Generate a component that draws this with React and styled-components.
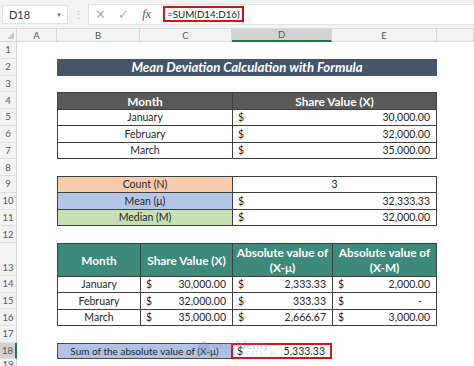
import React from 'react';
import styled, { createGlobalStyle } from 'styled-components';

const Global = createGlobalStyle`
  html, body { margin: 0; padding: 0; background: #fff; }
  body { font-family: Lato, "Noto Sans", sans-serif; }
`;

const Window = styled.div`
  width: 474px;
  height: 366px;
  overflow: hidden;
  display: flex;
  flex-direction: column;
  background: #fff;
  position: relative;
`;

const FormulaBar = styled.div`
  height: 29px;
  flex: none;
  display: flex;
  align-items: center;
  background: #f3f3f3;
  border-bottom: 1px solid #dadada;
  box-sizing: border-box;
  padding: 0 0 0 2px;
`;

const NameBox = styled.div`
  width: 66px;
  height: 19px;
  box-sizing: border-box;
  background: #fff;
  border: 1px solid #e2e2e2;
  display: flex;
  align-items: center;
  justify-content: space-between;
  padding: 0 5px 0 6px;
  font-size: 11px;
  color: #333;
`;

const Caret = styled.span`
  font-size: 6px;
  color: #777;
`;

const Dots = styled.div`
  width: 20px;
  text-align: center;
  color: #b5b5b5;
  font-size: 11px;
  line-height: 1;
`;

const InputArea = styled.div`
  flex: 1;
  height: 19px;
  background: #fff;
  border: 1px solid #e2e2e2;
  border-right: none;
  display: flex;
  align-items: center;
  padding-left: 0;
`;

const ToolIcon = styled.span`
  width: 23px;
  text-align: center;
  color: ${p => p.$c || '#b0b0b0'};
  font-size: ${p => p.$s || 12}px;
  font-family: ${p => p.$serif ? '"Liberation Serif", serif' : 'inherit'};
  font-style: ${p => p.$serif ? 'italic' : 'normal'};
`;

const FormulaText = styled.div`
  margin-left: 5px;
  height: 16px;
  box-sizing: border-box;
  border: 2px solid #e01010;
  display: flex;
  align-items: center;
  padding: 0 2px 0 2px;
  font-size: 9.8px;
  color: #222;
  white-space: nowrap;
`;

const Sheet = styled.div`
  flex: 1;
  display: grid;
  grid-template-columns: 17px 40px 83px 92px 100px 105px 1fr;
  grid-template-rows: 13px repeat(12, 16.75px) 33px repeat(5, 16.7px) 1fr;
`;

const Corner = styled.div`
  grid-column: 1;
  grid-row: 1;
  background: #f3f3f3;
  border-right: 1px solid #d6d6d6;
  border-bottom: 1px solid #d6d6d6;
  box-sizing: border-box;
  position: relative;
  &::after {
    content: '';
    position: absolute;
    right: 2px;
    bottom: 2px;
    border-left: 7px solid transparent;
    border-bottom: 7px solid #c4c4c4;
  }
`;

const ColHead = styled.div`
  grid-column: ${p => p.$col};
  grid-row: 1;
  background: ${p => p.$sel ? '#d2d2d2' : '#f3f3f3'};
  border-right: 1px solid #d6d6d6;
  border-bottom: ${p => p.$sel ? '2px solid #217346' : '1px solid #d6d6d6'};
  box-sizing: border-box;
  display: flex;
  align-items: center;
  justify-content: center;
  font-size: 9.5px;
  color: #555;
`;

const RowHead = styled.div`
  grid-column: 1;
  grid-row: ${p => p.$row + 1};
  background: ${p => p.$sel ? '#d2d2d2' : '#f3f3f3'};
  border-right: ${p => p.$sel ? '2px solid #217346' : '1px solid #d6d6d6'};
  border-bottom: 1px solid #dedede;
  box-sizing: border-box;
  display: flex;
  align-items: ${p => p.$tall ? 'flex-end' : 'center'};
  padding-bottom: ${p => p.$tall ? '2px' : '0'};
  justify-content: center;
  font-size: 9.5px;
  color: #555;
  overflow: hidden;
`;

const Title = styled.div`
  grid-column: 3 / 7;
  grid-row: 3;
  background: #44546a;
  color: #fff;
  font-weight: 700;
  font-style: italic;
  font-size: 13.2px;
  display: flex;
  align-items: center;
  justify-content: center;
`;

const Table = styled.div`
  grid-column: ${p => p.$cols};
  grid-row: ${p => p.$rows};
  display: grid;
  grid-template-columns: ${p => p.$tpl};
  grid-template-rows: ${p => p.$rowTpl || 'none'};
  grid-auto-rows: 1fr;
  gap: 1px;
  padding: 1px;
  background: #3f3f3f;
  min-height: 0;
`;

const Cell = styled.div`
  background: ${p => p.$bg || '#fff'};
  color: ${p => p.$head ? '#fff' : '#262626'};
  font-weight: ${p => p.$head ? 700 : 400};
  font-size: ${p => p.$head ? '11.8px' : '10.5px'};
  line-height: ${p => p.$head ? '15px' : '1'};
  text-align: center;
  display: flex;
  align-items: center;
  justify-content: ${p => p.$money ? 'space-between' : 'center'};
  padding: ${p => p.$money ? '0 6px 0 5px' : '0'};
  min-height: 0;
  overflow: hidden;
  white-space: nowrap;
`;

const Dollar = styled.span``;
const Amount = styled.span`
  padding-right: ${p => p.$pad || 0}px;
`;

const SumLabel = styled.div`
  grid-column: 3 / 5;
  grid-row: 19;
  background: #b0c3e6;
  border: 1px solid #4a4a4a;
  box-sizing: border-box;
  display: flex;
  align-items: center;
  justify-content: center;
  font-size: 10px;
  color: #262626;
`;

const SumValue = styled.div`
  grid-column: 5;
  grid-row: 19;
  margin-left: -1px;
  border: 2px solid #e01010;
  box-sizing: border-box;
  display: flex;
  align-items: center;
  justify-content: space-between;
  padding: 0 5px 0 4px;
  font-size: 10.5px;
  color: #262626;
  background: #fff;
`;

const Watermark = styled.div`
  position: absolute;
  left: 198px;
  top: 339px;
  display: flex;
  align-items: center;
  gap: 2px;
  opacity: 0.3;
  pointer-events: none;
`;

const WmText = styled.div`
  display: flex;
  flex-direction: column;
  line-height: 1;
  color: #7a8fc4;
`;

const WmBig = styled.span`
  font-size: 12px;
  font-weight: 700;
`;

const WmSmall = styled.span`
  font-size: 5px;
  letter-spacing: 1px;
  padding-left: 8px;
`;

const Money = ({ v, pad, ...rest }) => (
  <Cell $money {...rest}>
    <Dollar>$</Dollar>
    <Amount $pad={pad}>{v}</Amount>
  </Cell>
);

const colLetters = ['A', 'B', 'C', 'D', 'E', 'F'];

export default function App() {
  const rows = Array.from({ length: 19 }, (_, i) => i + 1);
  return (
    <Window>
      <Global />
      <FormulaBar>
        <NameBox>
          <span>D18</span>
          <Caret>▼</Caret>
        </NameBox>
        <Dots>⋮</Dots>
        <InputArea>
          <ToolIcon $s={13}>✕</ToolIcon>
          <ToolIcon $s={13}>✓</ToolIcon>
          <ToolIcon $serif $c="#555" $s={12}>fx</ToolIcon>
          <FormulaText>=SUM(D14:D16)</FormulaText>
        </InputArea>
      </FormulaBar>
      <Sheet>
        <Corner />
        {colLetters.map((c, i) => (
          <ColHead key={c} $col={i + 2} $sel={c === 'D'}>{c === 'F' ? '' : c}</ColHead>
        ))}
        {rows.map(r => (
          <RowHead key={r} $row={r} $sel={r === 18} $tall={r === 13}>{r}</RowHead>
        ))}

        <Title>Mean Deviation Calculation with Formula</Title>

        <Table $cols="3 / 7" $rows="5 / 9" $tpl="174px 1fr">
          <Cell $head $bg="#595959">Month</Cell>
          <Cell $head $bg="#595959">Share Value (X)</Cell>
          <Cell>January</Cell>
          <Money v="30,000.00" />
          <Cell>February</Cell>
          <Money v="32,000.00" />
          <Cell>March</Cell>
          <Money v="35,000.00" />
        </Table>

        <Table $cols="3 / 7" $rows="10 / 13" $tpl="174px 1fr">
          <Cell $bg="#f8cbad">Count (N)</Cell>
          <Cell>3</Cell>
          <Cell $bg="#b4c6e7">Mean (μ)</Cell>
          <Money v="32,333.33" />
          <Cell $bg="#c6e0b4">Median (M)</Cell>
          <Money v="32,000.00" />
        </Table>

        <Table $cols="3 / 7" $rows="14 / 18" $tpl="82px 91px 99px 1fr" $rowTpl="32px repeat(3, 1fr)">
          <Cell $head $bg="#3d8a7b">Month</Cell>
          <Cell $head $bg="#3d8a7b">Share Value (X)</Cell>
          <Cell $head $bg="#3d8a7b">Absolute value of<br />(X-μ)</Cell>
          <Cell $head $bg="#3d8a7b">Absolute value of<br />(X-M)</Cell>
          <Cell>January</Cell>
          <Money v="30,000.00" />
          <Money v="2,333.33" />
          <Money v="2,000.00" />
          <Cell>February</Cell>
          <Money v="32,000.00" />
          <Money v="333.33" />
          <Money v="-" pad={8} />
          <Cell>March</Cell>
          <Money v="35,000.00" />
          <Money v="2,666.67" />
          <Money v="3,000.00" />
        </Table>

        <SumLabel>Sum of the absolute value of (X-μ)</SumLabel>
        <SumValue>
          <Dollar>$</Dollar>
          <Amount>5,333.33</Amount>
        </SumValue>
      </Sheet>
      <Watermark>
        <svg width="12" height="14" viewBox="0 0 12 14">
          <path d="M6 0 L12 4 L12 14 L0 14 L0 4 Z" fill="#7a8fc4" />
        </svg>
        <WmText>
          <WmBig>exceldemy</WmBig>
          <WmSmall>EXCEL · DATA · BI</WmSmall>
        </WmText>
      </Watermark>
    </Window>
  );
}
